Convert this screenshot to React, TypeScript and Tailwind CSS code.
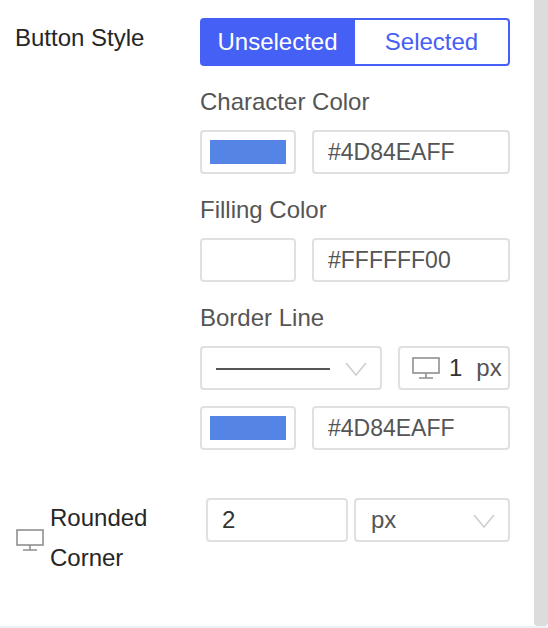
const blue = 'bg-[#5484e4]';

function MonitorIcon({ className }: { className?: string }) {
  return (
    <svg className={className} width="28" height="22" viewBox="0 0 28 22" fill="none" stroke="#8f8f8f" strokeWidth="1.6">
      <rect x="1" y="1" width="26" height="15" />
      <path d="M14 16v5M7 21h14" />
    </svg>
  );
}

function Chevron({ className }: { className?: string }) {
  return (
    <svg className={className} width="22" height="14" viewBox="0 0 22 14" fill="none" stroke="#cccccc" strokeWidth="1.5">
      <path d="M1 1l10 12L21 1" />
    </svg>
  );
}

function ColorRow({ swatch, value }: { swatch: boolean; value: string }) {
  return (
    <div className="flex gap-4">
      <div className="w-24 h-11 border-2 border-[#e0e0e0] rounded flex items-center justify-center">
        {swatch && <div className={`w-[76px] h-6 ${blue}`}></div>}
      </div>
      <div className="flex-1 h-11 border-2 border-[#e0e0e0] rounded flex items-center pl-[14px] text-[23px] text-[#555555]">
        {value}
      </div>
    </div>
  );
}

export default function App() {
  return (
    <div className="w-[548px] h-[628px] bg-white overflow-hidden font-['Liberation_Sans',Arial,sans-serif]">
      <div className="flex h-[626px]">
        <div className="w-[534px] pt-[18px] pl-[15px] pr-6">
          <div className="flex">
            <div className="w-[185px] text-2xl text-[#262626] leading-10">Button Style</div>
            <div className="flex-1">
              <div className="flex h-12 text-2xl">
                <div className="w-[155px] bg-[#4560f5] text-white rounded-l flex items-center justify-center">Unselected</div>
                <div className="flex-1 border-2 border-l-0 border-[#4560f5] text-[#4560f5] rounded-r flex items-center justify-center">Selected</div>
              </div>

              <div className="mt-[18px] mb-[10px] text-2xl leading-9 text-[#555555]">Character Color</div>
              <ColorRow swatch value="#4D84EAFF" />

              <div className="mt-[18px] mb-[10px] text-2xl leading-9 text-[#555555]">Filling Color</div>
              <ColorRow swatch={false} value="#FFFFFF00" />

              <div className="mt-[18px] mb-[10px] text-2xl leading-9 text-[#555555]">Border Line</div>
              <div className="flex gap-4 mb-4">
                <div className="w-[182px] h-11 border-2 border-[#e0e0e0] rounded flex items-center justify-between pl-[14px] pr-[13px]">
                  <div className="w-[114px] h-0.5 mt-0.5 bg-[#555555]"></div>
                  <Chevron className="mt-0.5" />
                </div>
                <div className="flex-1 h-11 border-2 border-[#e0e0e0] rounded flex items-center pl-[12px] text-2xl">
                  <MonitorIcon />
                  <span className="ml-[9px] text-[#333333]">1</span>
                  <span className="ml-[14px] text-[#555555]">px</span>
                </div>
              </div>
              <ColorRow swatch value="#4D84EAFF" />
            </div>
          </div>

          <div className="flex mt-12">
            <div className="w-[191px] flex items-center text-2xl leading-10 text-[#262626] h-[80px]">
              <MonitorIcon className="ml-px mr-[6px] mt-[4px] shrink-0" />
              <div>
                Rounded
                <br />
                Corner
              </div>
            </div>
            <div className="flex-1 flex gap-[6px]">
              <div className="w-[142px] h-11 border-2 border-[#e0e0e0] rounded flex items-center pl-[14px] text-2xl text-[#333333]">2</div>
              <div className="flex-1 h-11 border-2 border-[#e0e0e0] rounded flex items-center justify-between pl-[15px] pr-[13px] text-2xl text-[#555555]">
                px
                <Chevron className="mt-0.5" />
              </div>
            </div>
          </div>
        </div>
        <div className="w-[14px] bg-[#dcdcdc] rounded-b"></div>
      </div>
      <div className="h-0.5 bg-[#edf1f5]"></div>
    </div>
  );
}
